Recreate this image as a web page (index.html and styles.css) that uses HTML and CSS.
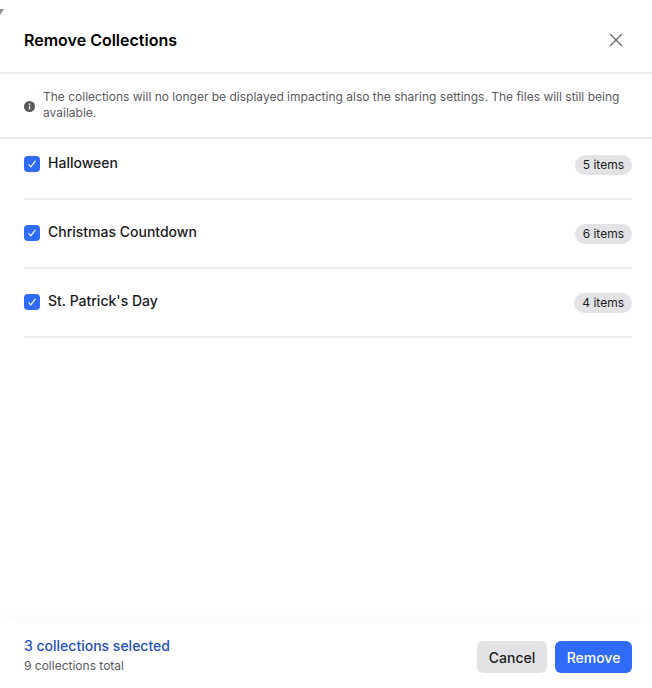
FILE: index.html
```html
<!DOCTYPE html>
<html lang="en">
<head>
<meta charset="utf-8">
<title>Remove Collections</title>
<link rel="stylesheet" href="styles.css">
</head>
<body>
<div class="modal">
  <span class="corner corner-top"></span>
  <span class="corner corner-bottom"></span>
  <header class="head">
    <h1 class="title">Remove Collections</h1>
    <svg class="close" width="14" height="14" viewBox="0 0 14 14" fill="none"><path d="M1 1l12 12M13 1L1 13" stroke="#5f5f62" stroke-width="1.1"/></svg>
  </header>
  <div class="notice">
    <svg class="info" width="11" height="11" viewBox="0 0 11 11"><circle cx="5.5" cy="5.5" r="5.5" fill="#58585b"/><rect x="4.8" y="4.8" width="1.5" height="3.6" fill="#fff"/><rect x="4.8" y="2.5" width="1.5" height="1.4" fill="#fff"/></svg>
    <p class="notice-text">The collections will no longer be displayed impacting also the sharing settings. The files will still being available.</p>
  </div>
  <main class="list">
    <div class="row">
      <span class="check"><svg width="10" height="10" viewBox="0 0 10 10" fill="none"><path d="M1.6 5.4l2.2 2.4L8.4 1.8" stroke="#fff" stroke-width="1.1"/></svg></span>
      <span class="name">Halloween</span>
      <span class="badge">5 items</span>
    </div>
    <div class="row">
      <span class="check"><svg width="10" height="10" viewBox="0 0 10 10" fill="none"><path d="M1.6 5.4l2.2 2.4L8.4 1.8" stroke="#fff" stroke-width="1.1"/></svg></span>
      <span class="name">Christmas Countdown</span>
      <span class="badge">6 items</span>
    </div>
    <div class="row">
      <span class="check"><svg width="10" height="10" viewBox="0 0 10 10" fill="none"><path d="M1.6 5.4l2.2 2.4L8.4 1.8" stroke="#fff" stroke-width="1.1"/></svg></span>
      <span class="name">St. Patrick's Day</span>
      <span class="badge">4 items</span>
    </div>
  </main>
  <footer class="foot">
    <div class="summary">
      <div class="selected">3 collections selected</div>
      <div class="total">9 collections total</div>
    </div>
    <div class="actions">
      <button class="btn btn-cancel">Cancel</button>
      <button class="btn btn-remove">Remove</button>
    </div>
  </footer>
</div>
</body>
</html>
```
FILE: styles.css
```css
* { box-sizing: border-box; }
html, body { margin: 0; height: 100%; }
body { background: #fff; font-family: Inter, "Liberation Sans", sans-serif; color: #111; overflow: hidden; }
.modal { position: relative; width: 652px; height: 688px; display: flex; flex-direction: column; background: #fff; }
.corner { position: absolute; left: 0; width: 4px; height: 6px; background: #8f8f8f; }
.corner-top { top: 9px; clip-path: polygon(0 0, 100% 0, 0 100%); }
.corner-bottom { bottom: 0; clip-path: polygon(0 0, 100% 100%, 0 100%); }
.head { height: 74px; flex: none; display: flex; align-items: center; justify-content: space-between; padding: 8px 29px 0 24px; border-bottom: 2px solid #ececed; }
.title { margin: 0; font-size: 16px; line-height: 24px; font-weight: 600; color: #000; }
.close { display: block; margin-top: -8px; transform: translateY(4px); }
.notice { height: 65px; flex: none; display: flex; align-items: center; gap: 8px; padding: 0 24px 1px; border-bottom: 2px solid #ececed; }
.info { flex: none; margin-top: 3px; }
.notice-text { margin: 0; font-size: 12px; line-height: 16px; color: #5a5a5e; }
.list { flex: 1; padding: 0 20px 0 24px; }
.row { height: 69px; display: flex; align-items: flex-start; padding-top: 24px; border-bottom: 2px solid #ececed; }
.row:first-child { height: 61px; padding-top: 16px; }
.check { width: 16px; height: 16px; flex: none; margin-top: 1px; margin-right: 8px; border-radius: 4px; background: #2f6bf6; display: flex; align-items: center; justify-content: center; }
.check svg { display: block; }
.name { flex: 1; margin-top: -1px; font-size: 14px; line-height: 18px; font-weight: 500; color: #1b1b1d; }
.badge { flex: none; height: 20px; padding: 0 8px; border-radius: 10px; background: #e3e3e5; font-size: 12px; line-height: 20px; color: #1b1b1d; }
.foot { height: 66px; flex: none; display: flex; align-items: center; justify-content: space-between; padding: 1px 20px 0 24px; box-shadow: 0 -6px 16px rgba(0,0,0,.025); background: #fff; position: relative; }
.selected { font-size: 14px; line-height: 18px; font-weight: 500; color: #1f4fbf; }
.total { font-size: 12px; line-height: 16px; color: #5a5a5e; margin-top: 3px; }
.actions { display: flex; gap: 8px; margin-top: 3px; }
.btn { height: 32px; border: 0; border-radius: 6px; font-family: inherit; font-size: 14px; font-weight: 500; padding: 0; }
.btn-cancel { width: 70px; background: #e3e3e5; color: #1b1b1d; }
.btn-remove { width: 77px; background: #2f6bf6; color: #fff; }
```
